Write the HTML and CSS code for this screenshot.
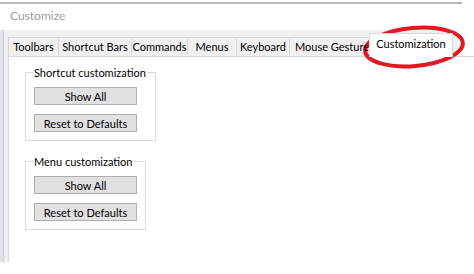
FILE: index.html
```html
<!DOCTYPE html>
<html>
<head>
<meta charset="utf-8">
<link rel="stylesheet" href="styles.css">
</head>
<body>
<div class="frame">
  <div class="titlebar">Customize</div>
  <div class="body">
    <div class="inner">
      <div class="tabs">
        <div class="tab t1">Toolbars</div>
        <div class="tab t2">Shortcut Bars</div>
        <div class="tab t3">Commands</div>
        <div class="tab t4">Menus</div>
        <div class="tab t5">Keyboard</div>
        <div class="tab t6">Mouse Gesture</div>
        <div class="tab selected">Customization</div>
      </div>
      <div class="panel">
        <fieldset class="group g1">
          <legend>Shortcut customization</legend>
          <button class="btn">Show All</button>
          <button class="btn">Reset to Defaults</button>
        </fieldset>
        <fieldset class="group g2">
          <legend>Menu customization</legend>
          <button class="btn">Show All</button>
          <button class="btn">Reset to Defaults</button>
        </fieldset>
      </div>
    </div>
  </div>
</div>
<svg class="circle" width="474" height="274" viewBox="0 0 474 274">
  <ellipse cx="414" cy="47" rx="49" ry="19" transform="rotate(-5 414 47)" fill="none" stroke="#e01a22" stroke-width="4"/>
</svg>
</body>
</html>
```

FILE: styles.css
```css
html, body {
  margin: 0;
  padding: 0;
  background: #ffffff;
  width: 474px;
  height: 274px;
  overflow: hidden;
  font-family: "Lato", "Open Sans", sans-serif;
}
.frame {
  margin-top: 2px;
  width: 462px;
  border-top: 2px solid #b9b9b9;
}
.titlebar {
  height: 26px;
  padding-left: 10px;
  font-size: 12px;
  line-height: 24px;
  color: #9c9c9c;
}
.body {
  background: #f0f0f0;
  border-left: 3px solid #e4e4ec;
  height: 232px;
  width: 455px;
}
.inner {
  border-left: 1px solid #c8c8d0;
  padding-left: 4px;
  padding-top: 7px;
  height: 225px;
  display: flex;
  flex-direction: column;
}
.tabs {
  display: flex;
  align-items: flex-end;
  height: 19px;
  position: relative;
  z-index: 1;
}
.tab {
  box-sizing: border-box;
  height: 19px;
  border: 1px solid #d9d9d9;
  border-bottom: none;
  margin-left: -1px;
  font-size: 11px;
  line-height: 17px;
  color: #000000;
  text-align: center;
  white-space: nowrap;
  overflow: hidden;
}
.t1 { margin-left: 0; width: 51px; }
.t2 { width: 74px; }
.t3 { width: 57px; }
.t4 { width: 50px; }
.t5 { width: 54px; }
.t6 { width: 82px; text-align: left; padding-left: 5px; }
.tab.selected {
  height: 24px;
  margin-bottom: -1px;
  margin-left: -2px;
  width: 84px;
  background: #ffffff;
  line-height: 20px;
}
.panel {
  flex: 1;
  background: #ffffff;
  border-top: 1px solid #d9d9d9;
  border-left: 1px solid #d9d9d9;
  margin-right: -30px;
  padding-top: 9px;
  padding-left: 16px;
}
.group {
  box-sizing: border-box;
  width: 121px;
  margin: 0;
  border: 1px solid #dcdcdc;
  padding: 8px 8px 8px 8px;
  display: flex;
  flex-direction: column;
  gap: 9px;
}
.g2 { margin-top: 14px; }
.group legend {
  font-size: 11px;
  line-height: 13px;
  color: #000000;
  padding: 0 1px;
  margin-left: -1px;
  white-space: nowrap;
}
.btn {
  box-sizing: border-box;
  height: 18px;
  width: 103px;
  background: #e1e1e1;
  border: 1px solid #adadad;
  font-family: "Lato", "Open Sans", sans-serif;
  font-size: 11px;
  line-height: 15px;
  color: #000000;
  padding: 0;
  margin: 0;
}
.circle {
  position: absolute;
  left: 0;
  top: 0;
  pointer-events: none;
}
```
